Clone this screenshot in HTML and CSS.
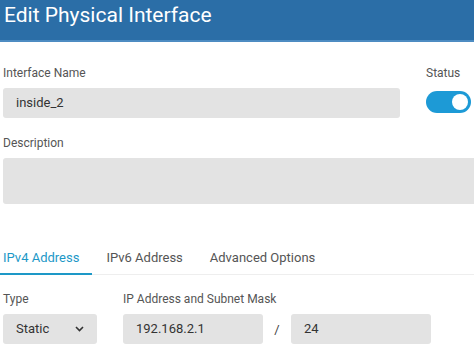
FILE: index.html
```html
<!DOCTYPE html>
<html lang="en">
<head>
  <meta charset="UTF-8">
  <title>Edit Physical Interface</title>
  <link rel="stylesheet" href="styles.css">
</head>
<body>

<header class="dialog-header">
  <h1>Edit Physical Interface</h1>
</header>

<div class="dialog-body">
  <div class="row">
    <div class="field grow">
      <label class="field-label">Interface Name</label>
      <div class="input">inside_2</div>
    </div>
    <div class="field status">
      <label class="field-label">Status</label>
      <div class="toggle on"><span class="knob"></span></div>
    </div>
  </div>

  <div class="field desc">
    <label class="field-label">Description</label>
    <div class="input textarea"></div>
  </div>

  <!-- tabs -->
  <ul class="tabs">
    <li class="tab active">IPv4 Address</li>
    <li class="tab">IPv6 Address</li>
    <li class="tab">Advanced Options</li>
  </ul>

  <div class="row ip-row">
    <div class="field">
      <label class="field-label">Type</label>
      <div class="input select">
        <span>Static</span>
        <svg width="9" height="6" viewBox="0 0 9 6"><path d="M1 1l3.5 3.5L8 1" fill="none" stroke="#333" stroke-width="1.6"/></svg>
      </div>
    </div>
    <div class="field">
      <label class="field-label">IP Address and Subnet Mask</label>
      <div class="ip-inputs">
        <div class="input ip">192.168.2.1</div>
        <span class="slash">/</span>
        <div class="input ip">24</div>
      </div>
    </div>
  </div>
</div>

</body>
</html>
```

FILE: styles.css
```css
body {
  margin: 0;
  font-family: Roboto, "Liberation Sans", Arial, sans-serif;
  background: #fff;
  color: #333;
  width: 474px;
  height: 349px;
  overflow: hidden;
}
.dialog-header {
  background-color: #2b6ea7;
  border-bottom: 2px solid #4d8cc2;
  height: 40px;
  padding: 0 4px;
}
.dialog-header h1 {
  margin: 0;
  color: #fff;
  font-weight: 400;
  font-size: 21px;
  line-height: 31px;
}
.dialog-body {
  padding: 24px 0 0 3px;
}
.row {
  display: flex;
  gap: 26px;
}
.field {
  display: flex;
  flex-direction: column;
}
.grow {
  width: 397px;
}
.field-label {
  font-size: 12px;
  color: #555;
  line-height: 14px;
  margin-bottom: 8px;
}
.input {
  background: #e3e3e3;
  border-radius: 3px;
  height: 30px;
  line-height: 30px;
  padding: 0 13px;
  font-size: 13px;
  color: #333;
  box-sizing: border-box;
}
.status {
  align-items: flex-start;
}
.toggle {
  width: 45px;
  height: 22px;
  border-radius: 11px;
  background: #1d9ad6;
  position: relative;
  margin-top: 3px;
}
.toggle .knob {
  position: absolute;
  right: 3px;
  top: 3px;
  width: 16px;
  height: 16px;
  border-radius: 50%;
  background: #fff;
}
.desc {
  margin-top: 18px;
}
.textarea {
  height: 46px;
  margin-right: -10px;
}
.tabs {
  list-style: none;
  margin: 46px 0 0 -3px;
  padding: 0 0 0 3px;
  display: flex;
  gap: 27px;
  border-bottom: 1px solid #eee;
}
.tab {
  font-size: 13px;
  color: #555;
  padding-bottom: 7px;
  line-height: 16px;
}
.tab.active {
  color: #1d98c7;
  border-bottom: 2px solid #1d98c7;
  margin-bottom: -1px;
  margin-left: -3px;
  margin-right: -13px;
  padding-left: 3px;
  padding-right: 13px;
}
.ip-row {
  margin-top: 17px;
}
.select {
  width: 94px;
  display: flex;
  justify-content: space-between;
  align-items: center;
}
.ip-inputs {
  display: flex;
  align-items: center;
}
.ip {
  width: 140px;
}
.slash {
  width: 28px;
  text-align: center;
  font-size: 13px;
  color: #444;
}
```
